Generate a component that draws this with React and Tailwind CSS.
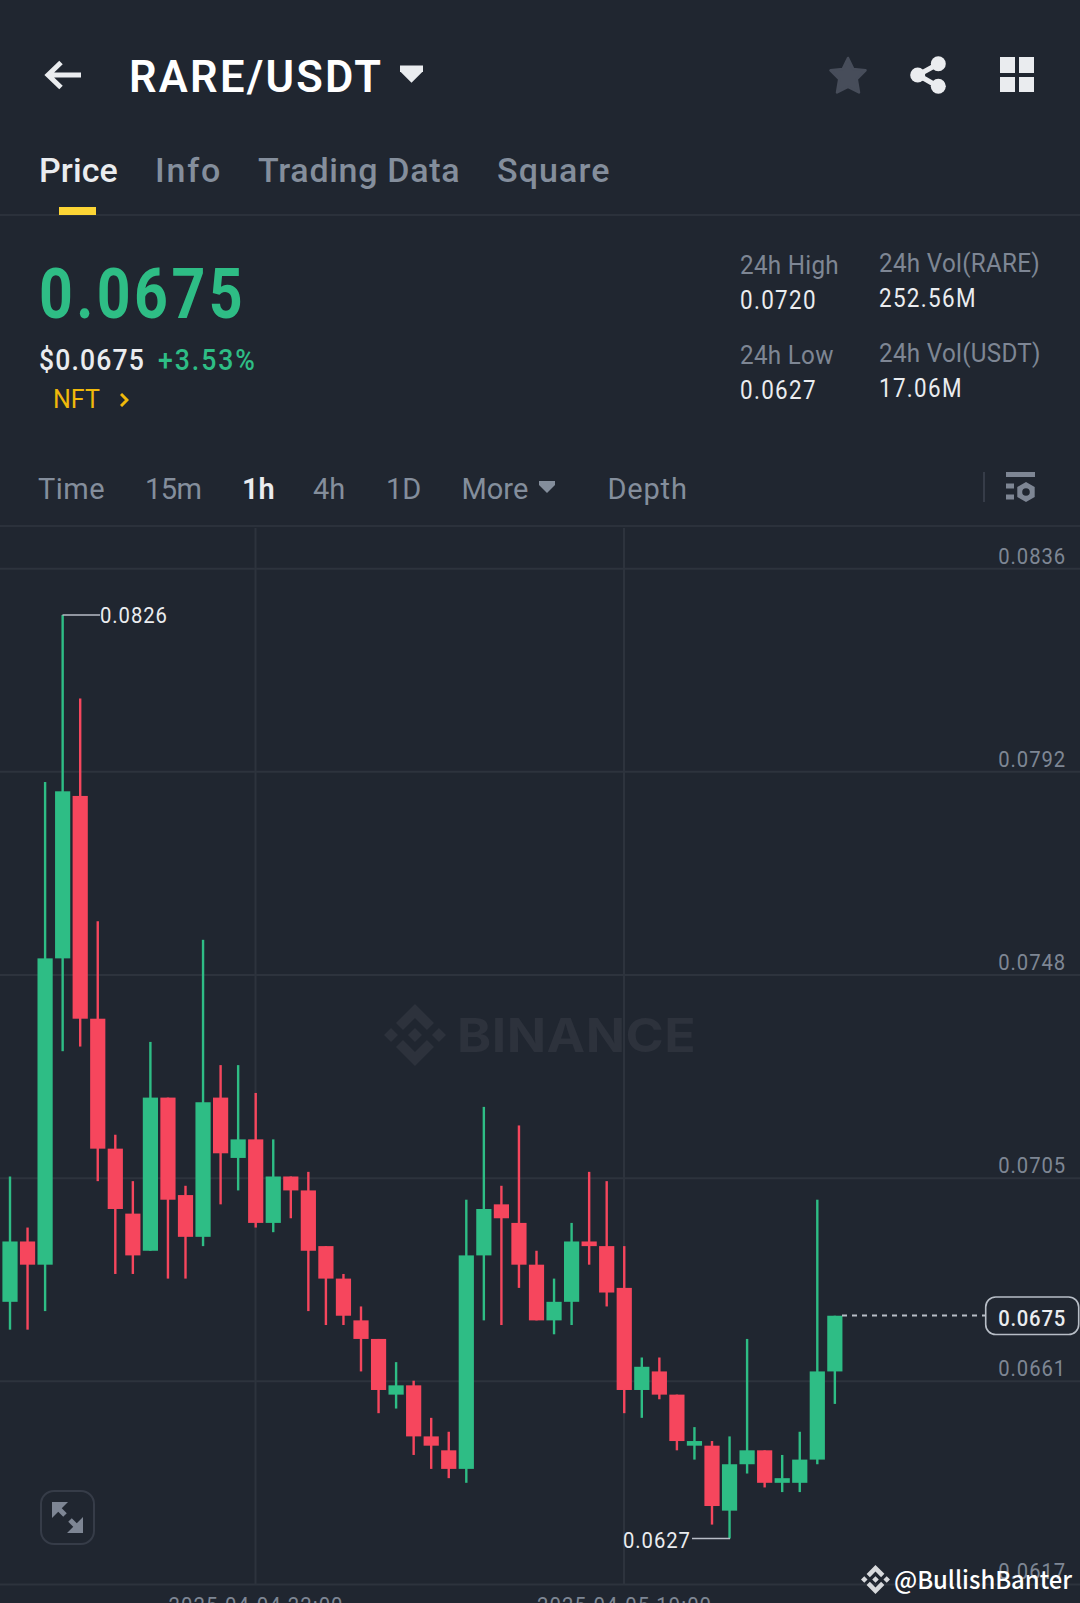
import React, { useState } from 'react';
import { SiBinance } from 'react-icons/si';

const UP = '#2ebd85';
const DOWN = '#f6465d';

const TABS = [
  { label: 'Price',        width: 'w-[79px]',  tracking: 'tracking-[0.1px]' },
  { label: 'Info',         width: 'w-[66px]',  tracking: 'tracking-[1.8px]' },
  { label: 'Trading Data', width: 'w-[202px]', tracking: 'tracking-[0.7px]' },
  { label: 'Square',       width: 'w-[114px]', tracking: 'tracking-[1.1px]' },
];

const INTERVALS = [
  { label: 'Time', width: 'w-[107px]', tracking: 'tracking-[0.5px]' },
  { label: '15m',  width: 'w-[97px]',  tracking: '-tracking-[0.5px]' },
  { label: '1h',   width: 'w-[71px]'  },
  { label: '4h',   width: 'w-[73px]'  },
  { label: '1D',   width: 'w-[75.5px]' },
  { label: 'More', width: 'w-[146px]', caret: true },
  { label: 'Depth', width: 'w-[90px]', tracking: 'tracking-[0.8px]' },
];

// [open, high, low, close] in ticks of 0.0001 USDT
const CANDLES = [
  [678, 705, 672, 691], [691, 694, 672, 686], [686, 790, 676, 752], [752, 826, 732, 788],
  [787, 808, 733, 739], [739, 760, 704, 711], [711, 714, 684, 698], [697, 704, 684, 688],
  [689, 734, 689, 722], [722, 722, 683, 700], [701, 703, 683, 692], [692, 756, 690, 721],
  [722, 729, 699, 710], [709, 729, 702, 713], [713, 723, 694, 695], [695, 713, 693, 705],
  [705, 705, 696, 702], [702, 706, 676, 689], [690, 690, 673, 683], [683, 684, 673, 675],
  [674, 677, 663, 670], [670, 670, 654, 659], [658, 665, 655, 660], [660, 661, 645, 649],
  [649, 653, 642, 647], [646, 650, 640, 642], [642, 700, 639, 688], [688, 720, 674, 698],
  [699, 703, 673, 696], [695, 716, 681, 686], [686, 689, 674, 674], [674, 683, 671, 678],
  [678, 695, 673, 691], [691, 706, 686, 690], [690, 704, 677, 680], [681, 690, 654, 659],
  [659, 666, 653, 664], [663, 666, 657, 658], [658, 658, 646, 648], [647, 651, 644, 648],
  [647, 648, 630, 634], [633, 649, 627, 643], [643, 670, 641, 646], [646, 646, 638, 639],
  [639, 645, 637, 640], [639, 650, 637, 644], [644, 700, 643, 663], [663, 675, 656, 675],
];

const PRICE_LABELS = ['0.0836', '0.0792', '0.0748', '0.0705', '0.0661', '0.0617'];
const TIME_LABELS = [
  { x: 255.5, text: '2025-04-04 22:00' },
  { x: 624,   text: '2025-04-05 19:00' },
];

const xAt = (i) => 10 + i * 17.55;
const yAt = (tick) => 1012.5 - (tick - 627) * 4.641;
const gridY = (i) => 42.7 + i * 203.15;

function Caret({ className }) {
  return (
    <svg viewBox="0 0 24 18" className={className} fill="currentColor">
      <path d="M0 0h24v6L12 18 0 6z" />
    </svg>
  );
}

function Header() {
  return (
    <header className="flex h-[130px] items-start pl-[44px] pr-[46px] pt-[46px]">
      <svg viewBox="0 0 38 30" className="mt-[14px] h-[30px] w-[38px]" fill="none" stroke="#eaecef" strokeWidth="5">
        <path d="M37 15H4M17 2.5 4 15l13 12.5" />
      </svg>
      <h1 className="ml-[47px] mt-[2px] w-[254px] whitespace-nowrap text-[43.5px] font-semibold leading-[60px] tracking-[2.2px] text-white">
        RARE/USDT
      </h1>
      <Caret className="ml-[17px] mt-[19px] h-[18px] w-[23px] text-[#eaecef]" />
      <div className="ml-auto flex items-start">
        <svg viewBox="0 0 38 38" className="mt-[10px] size-[38px]" fill="#474d5a" stroke="#474d5a" strokeWidth="2.5" strokeLinejoin="round">
          <path d="M19 2l5.2 10.900 12.300 1.400-8.700 8.800 2.200 13.400L19 31 8 36.500l2.200-13.400-8.700-8.800 12.300-1.400z" />
        </svg>
        <svg viewBox="0 0 36 38" className="ml-[43px] mt-[9.5px] h-[38px] w-[36px]" fill="#eaecef">
          <path d="M28 8 8 19l20 11.5" fill="none" stroke="#eaecef" strokeWidth="5" />
          <circle cx="28.3" cy="7.7" r="7.5" />
          <circle cx="7.7" cy="19" r="7.5" />
          <circle cx="28.3" cy="30.3" r="7.5" />
        </svg>
        <div className="ml-[54px] mt-[11px] grid grid-cols-2 gap-x-[4px] gap-y-[4px]">
          {[0, 1, 2, 3].map((i) => (
            <span key={i} className="h-[15.5px] w-[15px] bg-[#eaecef]" />
          ))}
        </div>
      </div>
    </header>
  );
}

function Tabs() {
  const [active, setActive] = useState('Price');
  return (
    <nav className="flex h-[86px] gap-[37px] border-b-2 border-[#2b313b] pl-[39px]">
      {TABS.map((t) => (
        <button key={t.label} onClick={() => setActive(t.label)}
          className={`flex h-[85px] flex-col items-center justify-between pt-[16px] text-left text-[34px] font-medium leading-[48px] ${t.width} ${t.tracking}
            ${active === t.label ? 'text-[#eaecef]' : 'text-[#848e9c]'}`}>
          <span className="w-full whitespace-nowrap">{t.label}</span>
          {active === t.label && <span className="mr-[2px] h-[8px] w-[37px] bg-[#fcd535]" />}
        </button>
      ))}
    </nav>
  );
}

function Stat({ label, value }) {
  return (
    <div className="whitespace-nowrap text-[25.5px] leading-[35px]">
      <div className="origin-left scale-x-95 tracking-[0.3px] text-[#7e8694]">{label}</div>
      <div className="origin-left scale-x-[.88] tracking-[1.5px] text-[#eaecef]">{value}</div>
    </div>
  );
}

function Summary() {
  return (
    <section className="flex h-[236px] justify-between pl-[39px] pr-[39px]">
      <div className="pt-[44px]">
        <div className="origin-left scale-x-[.85] whitespace-nowrap text-[69.5px] font-bold leading-[70px] tracking-[4px] text-[#2ebd85]">
          0.0675
        </div>
        <div className="mt-[10px] flex text-[29.5px] font-medium leading-[40px]">
          <span className="w-[119px] origin-left scale-x-[.9] tracking-[1.3px] text-[#eaecef]">$0.0675</span>
          <span className="origin-left scale-x-[.9] tracking-[2.2px] text-[#2ebd85]">+3.53%</span>
        </div>
        <div className="flex items-center pl-[14px] pt-px text-[25px] leading-[38px] text-[#f0b90b]">
          NFT
          <svg viewBox="0 0 9 14" className="ml-[20px] h-[14px] w-[9px]" fill="none" stroke="currentColor" strokeWidth="3">
            <path d="M1 1l6 6-6 6" />
          </svg>
        </div>
      </div>
      <div className="flex gap-[41px]">
        <div className="flex w-[98px] flex-col gap-[20px] pt-[32px]">
          <Stat label="24h High" value="0.0720" />
          <Stat label="24h Low" value="0.0627" />
        </div>
        <div className="flex w-[162px] flex-col gap-[20px] pt-[30px]">
          <Stat label="24h Vol(RARE)" value="252.56M" />
          <Stat label="24h Vol(USDT)" value="17.06M" />
        </div>
      </div>
    </section>
  );
}

function IntervalBar() {
  const [active, setActive] = useState('1h');
  return (
    <div className="flex h-[75px] items-center border-b-2 border-[#2b313b] pl-[38px] pr-[45px]">
      {INTERVALS.map((it) => (
        <button key={it.label} onClick={() => setActive(it.label)}
          className={`flex items-center whitespace-nowrap text-left text-[29px] leading-[40px] ${it.width} ${it.tracking ?? ''}
            ${active === it.label ? 'font-semibold text-[#eaecef]' : 'text-[#848e9c]'}`}>
          {it.label}
          {it.caret && <Caret className="-mt-[4px] ml-[11px] h-[12px] w-[16px]" />}
        </button>
      ))}
      <span className="-mt-[4px] ml-auto h-[30px] w-[2.5px] bg-[#363c48]" />
      <svg viewBox="0 0 29 30" className="-mt-[3px] ml-[21px] h-[30px] w-[29px]" fill="#7e8694">
        <path d="M0 0h29v5H0zM0 11.5h8v5H0zM0 22.5h8v5H0z" />
        <path fillRule="evenodd" d="M20 10l8.700 5v10L20 30l-8.700-5V15zM20 16.200a3.800 3.800 0 1 0 0 7.600 3.800 3.800 0 0 0 0-7.600z" />
      </svg>
    </div>
  );
}

function Candle({ index, data }) {
  const [open, high, low, close] = data;
  const x = xAt(index);
  const color = close >= open ? UP : DOWN;
  const top = yAt(Math.max(open, close));
  const bottom = yAt(Math.min(open, close));
  return (
    <g fill={color}>
      <rect x={x - 1.2} y={yAt(high)} width="2.4" height={yAt(low) - yAt(high)} />
      <rect x={x - 7.6} y={top} width="15.2" height={bottom - top} />
    </g>
  );
}

// Slightly condensed digits, spread over the given width
function ChartText({ x, y, width, children, ...rest }) {
  return (
    <text transform={`translate(${x} ${y}) scale(0.9 1)`} fontSize="22.5" textLength={width / 0.9} {...rest}>
      {children}
    </text>
  );
}

function Chart() {
  return (
    <div className="relative -mt-px h-[1077px]">
      {/* Brand watermark */}
      <div className="absolute left-[384px] top-[478px] flex items-center text-[#2d323c]">
        <SiBinance className="size-[62px]" />
        <svg className="ml-[11px] h-[62px] w-[242px]" viewBox="0 0 242 62">
          <text transform="translate(0 48) scale(1.1 1)" fontSize="47" fontWeight="700" fill="currentColor"
            fontFamily="Inter, sans-serif" textLength="217">BINANCE</text>
        </svg>
      </div>

      <svg viewBox="0 0 1080 1077" className="absolute inset-0 h-[1077px] w-[1080px]">
        <g stroke="#2d333d" strokeWidth="2">
          {PRICE_LABELS.map((p, i) => (
            <line key={p} x1="0" x2="1080" y1={gridY(i)} y2={gridY(i)} />
          ))}
          {TIME_LABELS.map((t) => (
            <line key={t.x} x1={t.x} x2={t.x} y1="2" y2={gridY(5)} />
          ))}
        </g>

        {CANDLES.map((c, i) => <Candle key={i} index={i} data={c} />)}

        {/* Axis labels */}
        <g fill="#7e8694">
          {PRICE_LABELS.map((p, i) => (
            <ChartText key={p} x={998.2} y={gridY(i) - 5} width={67}>{p}</ChartText>
          ))}
          {TIME_LABELS.map((t) => (
            <ChartText key={t.x} x={t.x - 87} y={1086.5} width={174}>{t.text}</ChartText>
          ))}
        </g>

        {/* High and low callouts */}
        <g stroke="#b7bdc6" strokeWidth="1.6">
          <line x1="62.5" x2="100" y1="89" y2="89" />
          <line x1="692" x2="730" y1="1012.5" y2="1012.5" />
        </g>
        <g fill="#eaecef">
          <ChartText x={100} y={97.4} width={67}>0.0826</ChartText>
          <ChartText x={623} y={1021.5} width={67}>0.0627</ChartText>
        </g>

        {/* Last price */}
        <line x1="842" x2="985" y1="789.5" y2="789.5" stroke="#b7bdc6" strokeWidth="1.8" strokeDasharray="5 5" />
        <rect x="985.7" y="771" width="93" height="37.5" rx="10" fill="#202630" stroke="#b7bdc6" strokeWidth="1.6" />
        <ChartText x={998.2} y={800.4} width={67} fontWeight="500" fill="#eaecef">0.0675</ChartText>
      </svg>

      <button className="absolute left-[40px] top-[964px] flex size-[55px] items-center justify-center rounded-[14px] border-2 border-[#363c48]">
        <svg viewBox="0 0 31 31" className="size-[31px]" fill="#7e8694">
          <path d="M0 0h16L0 16zM31 31H15l16-16z" />
          <path d="M4 4l9 9M27 27l-9-9" stroke="#7e8694" strokeWidth="5" />
        </svg>
      </button>

      {/* Author tag */}
      <div className="absolute left-[861px] top-[1038px] flex items-start">
        <SiBinance className="mt-px size-[29px] text-[#d7d9dc]" />
        <svg className="h-[36px] w-[190px]" viewBox="0 0 190 36">
          <text x="4" y="24.5" fontSize="24.5" fontWeight="500" fill="#fff" textLength="178"
            fontFamily="'Noto Sans CJK SC', sans-serif" lengthAdjust="spacingAndGlyphs">@BullishBanter</text>
        </svg>
      </div>
    </div>
  );
}

export default function App() {
  return (
    <main className="h-[1603px] w-[1080px] overflow-hidden bg-[#202630] font-['Roboto',sans-serif]">
      <Header />
      <Tabs />
      <Summary />
      <IntervalBar />
      <Chart />
    </main>
  );
}
